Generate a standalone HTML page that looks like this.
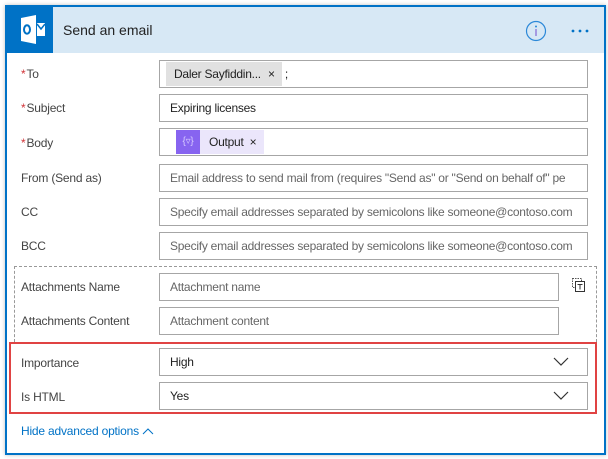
<!DOCTYPE html>
<html><head><style>
*{box-sizing:border-box;margin:0;padding:0}
body{width:608px;height:459px;background:#fff;font-family:"Liberation Sans",sans-serif;font-size:12px;color:#333;position:relative;overflow:hidden}
.card{position:absolute;left:5px;top:5px;width:601px;height:450px;border:2px solid #0072c6;box-shadow:0 0 4px rgba(0,0,0,.25)}
.hdr{position:absolute;left:0;top:0;right:0;height:46px;background:#d7e8f5}
.ico{position:absolute;left:0;top:0;width:46px;height:46px;background:#0072c6}
.title{position:absolute;left:56px;top:15px;font-size:14px;color:#222}
.a{position:absolute}
.lbl{position:absolute;left:21px;font-size:12px;color:#444;letter-spacing:-0.2px}
.req{color:#d13438;margin-right:1px}
.inp{position:absolute;left:159px;width:429px;height:28px;border:1px solid #a6a6a6;background:#fff;padding:0 10px;line-height:26px;color:#222;letter-spacing:-0.25px}
.ph{color:#666}
.chev{position:absolute;right:18px;top:8px}
</style></head><body>
<div class="card">
<div class="hdr">
<div class="ico"><svg width="46" height="46" viewBox="0 0 46 46"><path d="M14 11 L29 8 L29 37 L14 34 Z" fill="#fff"/><ellipse cx="20" cy="22.5" rx="3" ry="4.2" fill="none" stroke="#0072c6" stroke-width="2"/><path d="M30 16 H38 V29 H30 Z" fill="#fff"/><path d="M30 17 L34 22 L38 17" fill="none" stroke="#0072c6" stroke-width="1.5"/></svg></div>
<div class="title">Send an email</div>
<svg class="a" style="left:518px;top:13px" width="22" height="22"><circle cx="11" cy="11" r="9.5" fill="none" stroke="#2b88d8" stroke-width="1.2"/><circle cx="11" cy="6.5" r="1" fill="#2b88d8"/><path d="M11 9v7" stroke="#8a6fd8" stroke-width="1.3"/></svg>
<svg class="a" style="left:564px;top:22px" width="22" height="4"><circle cx="2" cy="2" r="1.4" fill="#0072c6"/><circle cx="9" cy="2" r="1.4" fill="#0072c6"/><circle cx="16" cy="2" r="1.4" fill="#0072c6"/></svg>
</div>
</div>
<div class="lbl" style="top:67px"><span class="req">*</span>To</div>
<div class="inp" style="top:60px;padding-left:6px"><span style="display:inline-block;background:#e1e1e1;height:24px;line-height:24px;margin-top:1px;padding:0 7px 0 8px;color:#222">Daler Sayfiddin... <span style="margin-left:4px">×</span></span> ;</div>
<div class="lbl" style="top:101px"><span class="req">*</span>Subject</div>
<div class="inp" style="top:94px">Expiring licenses</div>
<div class="lbl" style="top:136px"><span class="req">*</span>Body</div>
<div class="inp" style="top:128px;padding-left:16px"><span style="display:inline-block;height:24px;margin-top:1px;background:#ebe6fb;line-height:24px;padding-right:8px"><span style="display:inline-block;width:24px;height:24px;background:#8764f0;color:#d8ccff;text-align:center;font-size:10px;vertical-align:top">{▿}</span><span style="margin-left:9px">Output</span> <span style="margin-left:3px">×</span></span></div>
<div class="lbl" style="top:171px">From (Send as)</div>
<div class="inp ph" style="top:164px;white-space:nowrap;overflow:hidden">Email address to send mail from (requires "Send as" or "Send on behalf of" pe</div>
<div class="lbl" style="top:205px">CC</div>
<div class="inp ph" style="top:198px;white-space:nowrap;overflow:hidden">Specify email addresses separated by semicolons like someone@contoso.com</div>
<div class="lbl" style="top:239px">BCC</div>
<div class="inp ph" style="top:232px;white-space:nowrap;overflow:hidden">Specify email addresses separated by semicolons like someone@contoso.com</div>
<div class="a" style="left:14px;top:266px;width:583px;height:76px;border:1px dashed #999;border-bottom:none"></div>
<div class="lbl" style="top:280px">Attachments Name</div>
<div class="inp ph" style="top:273px;width:400px">Attachment name</div>
<div class="lbl" style="top:314px">Attachments Content</div>
<div class="inp ph" style="top:307px;width:400px">Attachment content</div>
<svg class="a" style="left:572px;top:278px" width="14" height="14"><rect x="0.5" y="0.5" width="9" height="9" fill="none" stroke="#555" stroke-dasharray="1.5 1"/><rect x="3.5" y="3.5" width="9" height="10" fill="#fff" stroke="#333"/><path d="M5.5 6.5h5M8 6.5v5" stroke="#333"/></svg>
<div class="a" style="left:9px;top:342px;width:588px;height:72px;border:2px solid #e04343"></div>
<div class="lbl" style="top:356px">Importance</div>
<div class="inp" style="top:348px">High<svg class="chev" width="16" height="10"><path d="M1 1l7 7 7-7" fill="none" stroke="#333" stroke-width="1.2"/></svg></div>
<div class="lbl" style="top:390px">Is HTML</div>
<div class="inp" style="top:382px">Yes<svg class="chev" width="16" height="10"><path d="M1 1l7 7 7-7" fill="none" stroke="#333" stroke-width="1.2"/></svg></div>
<div class="lbl" style="top:424px;color:#0072c6">Hide advanced options <svg width="12" height="8"><path d="M1 7l5-5 5 5" fill="none" stroke="#0072c6" stroke-width="1"/></svg></div>
</body></html>
